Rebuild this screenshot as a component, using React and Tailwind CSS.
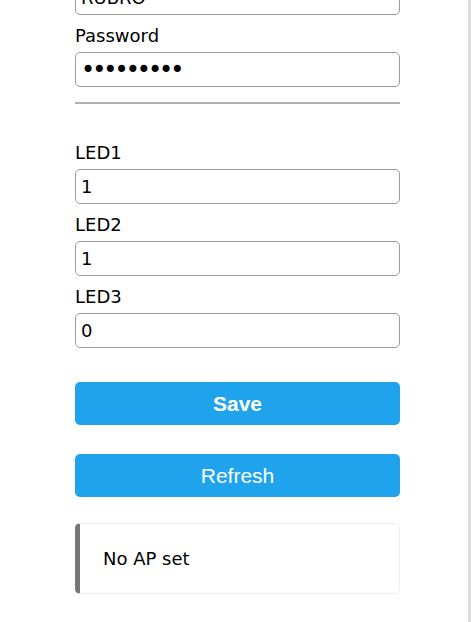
import React from "react";

const font = { fontFamily: '"DejaVu Sans", Verdana, sans-serif' };
const btnFont = { fontFamily: '"Liberation Sans", Arial, sans-serif' };

const inputCls =
    "block w-full h-[35px] px-[5px] text-[18px] text-black bg-white border border-[#9a9a9a] rounded-[5px] outline-none";

const Field = ({ label, value, type = "text", className = inputCls }) => (
    <div>
        <label className="block mt-[10px] mb-[6px] text-[18px] leading-[21px] text-black">
            {label}
        </label>
        <input type={type} defaultValue={value} className={className} />
    </div>
);

const App = () => {
    return (
        <div className="flex h-[622px] overflow-hidden bg-white" style={font}>
            <div className="flex-1">
                <div className="w-[325px] ml-[75px] -mt-[20px]">
                    <input type="text" defaultValue="RUBRO" className={inputCls} />
                    <Field
                        label="Password"
                        value="123456789"
                        type="password"
                        className="block w-full h-[35px] px-[5px] text-[24px] tracking-[-3px] text-black bg-white border border-[#9a9a9a] rounded-[5px] outline-none"
                    />
                    <hr className="mt-[15px] border-0 h-[2px] bg-[#b0b0b0]" />

                    <div className="mt-[38px]">
                        <Field label="LED1" value="1" />
                        <Field label="LED2" value="1" />
                        <Field label="LED3" value="0" />
                    </div>

                    <button
                        className="block w-full mt-[34px] h-[43px] rounded-[5px] bg-[#1fa3ec] text-white text-[21px] font-bold"
                        style={btnFont}
                    >
                        Save
                    </button>
                    <button
                        className="block w-full mt-[29px] h-[43px] rounded-[5px] bg-[#1fa3ec] text-white text-[21px]"
                        style={btnFont}
                    >
                        Refresh
                    </button>

                    <div className="mt-[26px] py-[24px] pl-[23px] border border-[#eeeeee] border-l-[5px] border-l-[#777777] rounded-[5px] text-[18px] leading-[21px] text-black">
                        No AP set
                    </div>
                </div>
            </div>
            <div className="w-[3px] bg-[#dddddd]" />
            <div className="w-[3px]" />
        </div>
    );
};

export default App;
